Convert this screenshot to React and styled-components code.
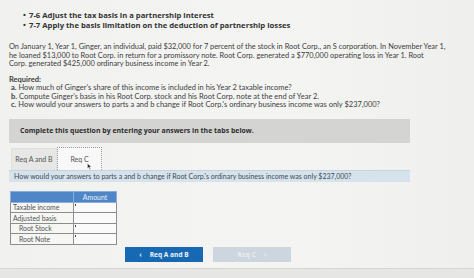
import React from "react";
import styled, { createGlobalStyle } from "styled-components";

const Global = createGlobalStyle`
  html, body { margin: 0; padding: 0; }
  body {
    width: 474px;
    height: 278px;
    overflow: hidden;
    background: #e6e6e5;
    font-family: Lato, "Open Sans", sans-serif;
    color: #3a3a3a;
  }
`;

const Page = styled.div`
  height: 269px;
  background: linear-gradient(90deg, #f1f1f0 0%, #f4f4f3 60%, #efefee 100%);
  padding: 11px 0 0 9px;
  box-sizing: border-box;
  border-bottom: 1px solid #d6d6d5;
`;

const Goals = styled.ul`
  margin: 0;
  padding: 0 0 0 20px;
  list-style: none;
  font-family: "Open Sans", Lato, sans-serif;
  font-size: 7.7px;
  font-weight: 700;
  line-height: 9.5px;
  color: #333;
`;

const Goal = styled.li`
  position: relative;
  &::before {
    content: "•";
    position: absolute;
    left: -6px;
  }
`;

const Para = styled.p`
  margin: 13px 0 0;
  font-size: 7.4px;
  line-height: 8.6px;
  color: #3d3d3d;
`;

const Req = styled.div`
  margin-top: 7px;
  font-size: 7.5px;
  line-height: 8.5px;
  color: #3d3d3d;
`;

const ReqTitle = styled.div`
  font-weight: 700;
`;

const ReqItem = styled.div`
  padding-left: 2px;
  b { font-weight: 700; }
`;

const Banner = styled.div`
  margin-top: 9px;
  width: 401px;
  height: 24px;
  display: flex;
  align-items: center;
  padding-left: 11px;
  box-sizing: border-box;
  background: #d4d4d2;
  font-family: "Open Sans", Lato, sans-serif;
  font-size: 6.95px;
  font-weight: 700;
  color: #2c2c2c;
`;

const Tabs = styled.div`
  margin-top: 4px;
  display: flex;
  align-items: flex-end;
  height: 23px;
  padding-left: 2px;
`;

const Tab = styled.div`
  width: ${p => p.w}px;
  height: ${p => (p.active ? 23 : 22)}px;
  box-sizing: border-box;
  display: flex;
  align-items: center;
  justify-content: center;
  font-size: 7px;
  color: #555;
  background: ${p => (p.active ? "#f8f8f8" : "#e7e7e6")};
  border: 1px ${p => (p.active ? "dotted #9a9a9a" : "solid #e0e0df")};
  border-bottom: none;
  position: relative;
`;

const Cursor = styled.svg`
  position: absolute;
  left: 29px;
  top: 15px;
`;

const Prompt = styled.div`
  width: 401px;
  height: 12px;
  box-sizing: border-box;
  padding-left: 5px;
  display: flex;
  align-items: center;
  background: #d6e3ec;
  border-top: 1px solid #c4d4df;
  font-size: 7px;
  color: #3c4a55;
`;

const Table = styled.table`
  margin-top: 9px;
  margin-left: 1px;
  border-collapse: collapse;
  font-size: 6.9px;
  color: #555;
`;

const Th = styled.th`
  background: #4f86c7;
  color: #e9f0f7;
  font-weight: 400;
  height: 10px;
  padding: 0;
  width: ${p => p.w}px;
  border: 1px solid #8aaed6;
`;

const Td = styled.td`
  height: 9.5px;
  padding: 0 0 0 ${p => p.indent || 2}px;
  border: 1px solid #8d8d8d;
  background: #f6f6f5;
  line-height: 9px;
`;

const Input = styled.td`
  height: 9.5px;
  padding: 0;
  border: 1px solid #8d8d8d;
  background: #fafafa;
  position: relative;
  &::after {
    content: "";
    display: ${p => (p.field ? "block" : "none")};
    position: absolute;
    left: 1px;
    top: 1px;
    width: 1px;
    height: 2px;
    background: #444;
  }
`;

const Nav = styled.div`
  display: flex;
  gap: 10px;
  margin: 2px 0 0 116px;
`;

const NavButton = styled.div`
  width: 78px;
  height: 15px;
  display: flex;
  align-items: center;
  justify-content: center;
  gap: 8px;
  font-family: "Open Sans", Lato, sans-serif;
  font-size: 6.6px;
  font-weight: 700;
  color: ${p => (p.disabled ? "#e8edf2" : "#eef4fb")};
  background: ${p => (p.disabled ? "#cdd6de" : "#1869b4")};
`;

export default function App() {
  return (
    <>
      <Global />
      <Page>
        <Goals>
          <Goal>7-6 Adjust the tax basis in a partnership interest</Goal>
          <Goal>7-7 Apply the basis limitation on the deduction of partnership losses</Goal>
        </Goals>
        <Para>
          On January 1, Year 1, Ginger, an individual, paid $32,000 for 7 percent of the stock in Root Corp., an S corporation. In November Year 1,
          <br />
          he loaned $13,000 to Root Corp. in return for a promissory note. Root Corp. generated a $770,000 operating loss in Year 1. Root
          <br />
          Corp. generated $425,000 ordinary business income in Year 2.
        </Para>
        <Req>
          <ReqTitle>Required:</ReqTitle>
          <ReqItem><b>a.</b> How much of Ginger's share of this income is included in his Year 2 taxable income?</ReqItem>
          <ReqItem><b>b.</b> Compute Ginger's basis in his Root Corp. stock and his Root Corp. note at the end of Year 2.</ReqItem>
          <ReqItem><b>c.</b> How would your answers to parts a and b change if Root Corp.'s ordinary business income was only $237,000?</ReqItem>
        </Req>
        <Banner>Complete this question by entering your answers in the tabs below.</Banner>
        <Tabs>
          <Tab w={46}>Req A and B</Tab>
          <Tab w={45} active>
            Req C
            <Cursor width="5" height="7" viewBox="0 0 5 7">
              <path d="M0.5 0.5 L0.5 5.5 L1.8 4.3 L2.8 6.5 L3.6 6.1 L2.6 4 L4.3 4 Z" fill="#222" stroke="#fff" strokeWidth="0.4" />
            </Cursor>
          </Tab>
        </Tabs>
        <Prompt>How would your answers to parts a and b change if Root Corp.'s ordinary business income was only $237,000?</Prompt>
        <Table>
          <thead>
            <tr>
              <Th w={62} />
              <Th w={42}>Amount</Th>
            </tr>
          </thead>
          <tbody>
            <tr><Td>Taxable income</Td><Input field /></tr>
            <tr><Td>Adjusted basis</Td><Input /></tr>
            <tr><Td indent={8}>Root Stock</Td><Input field /></tr>
            <tr><Td indent={8}>Root Note</Td><Input field /></tr>
          </tbody>
        </Table>
        <Nav>
          <NavButton><span>‹</span><span>Req A and B</span></NavButton>
          <NavButton disabled><span>Req C</span><span>›</span></NavButton>
        </Nav>
      </Page>
    </>
  );
}
